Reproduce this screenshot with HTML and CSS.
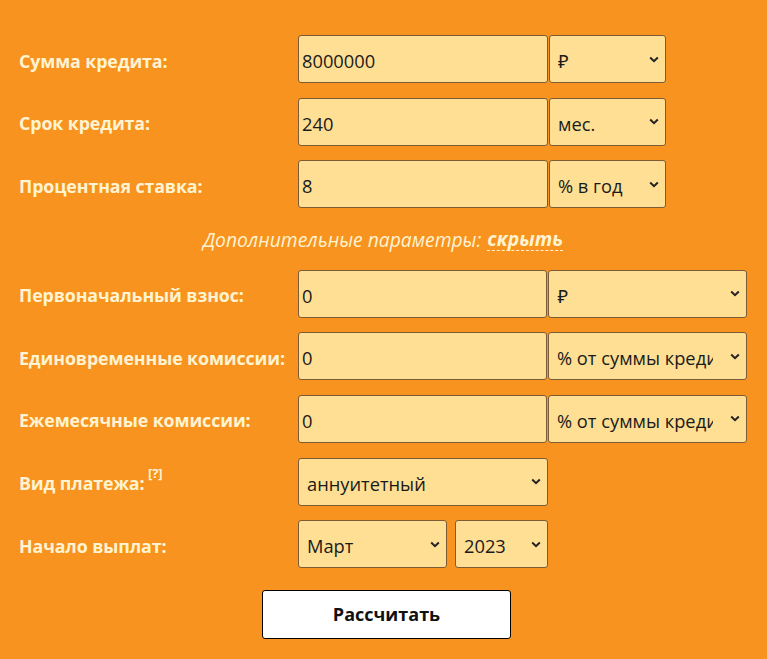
FILE: index.html
```html
<!DOCTYPE html>
<html lang="ru">
<head>
<meta charset="utf-8">
<title>Кредитный калькулятор</title>
<link rel="stylesheet" href="styles.css">
</head>
<body>
<form class="calc">
  <div class="row">
    <label class="lbl">Сумма кредита:</label>
    <input class="inp" type="text" value="8000000">
    <select class="sel sel-s"><option>₽</option></select>
  </div>
  <div class="row">
    <label class="lbl">Срок кредита:</label>
    <input class="inp" type="text" value="240">
    <select class="sel sel-s"><option>мес.</option></select>
  </div>
  <div class="row">
    <label class="lbl">Процентная ставка:</label>
    <input class="inp" type="text" value="8">
    <select class="sel sel-s"><option>% в год</option></select>
  </div>
  <div class="extra">Дополнительные параметры: <span class="toggle">скрыть</span></div>
  <div class="row">
    <label class="lbl">Первоначальный взнос:</label>
    <input class="inp" type="text" value="0">
    <select class="sel sel-l"><option>₽</option></select>
  </div>
  <div class="row">
    <label class="lbl">Единовременные комиссии:</label>
    <input class="inp" type="text" value="0">
    <select class="sel sel-l"><option>% от суммы кредита</option></select>
  </div>
  <div class="row">
    <label class="lbl">Ежемесячные комиссии:</label>
    <input class="inp" type="text" value="0">
    <select class="sel sel-l"><option>% от суммы кредита</option></select>
  </div>
  <div class="row">
    <label class="lbl">Вид платежа: <span class="hint">[?]</span></label>
    <select class="sel sel-w"><option>аннуитетный</option></select>
  </div>
  <div class="row">
    <label class="lbl">Начало выплат:</label>
    <div class="pair">
      <select class="sel sel-m"><option>Март</option></select>
      <select class="sel sel-y"><option>2023</option></select>
    </div>
  </div>
  <div class="actions">
    <button class="btn" type="button">Рассчитать</button>
  </div>
</form>
</body>
</html>
```
FILE: styles.css
```css
html, body {
  margin: 0;
  padding: 0;
  background: #f7931e;
}
body {
  font-family: "Open Sans", "Noto Sans", sans-serif;
  width: 767px;
  height: 659px;
  overflow: hidden;
}
.calc {
  width: 728px;
  padding: 35px 0 0 19px;
  display: flex;
  flex-direction: column;
}
.row {
  display: flex;
  align-items: center;
  height: 48px;
  margin-bottom: 14.6px;
}
.lbl {
  width: 279px;
  flex: none;
  color: #fff3d2;
  font-weight: 700;
  font-size: 17.8px;
  letter-spacing: -0.1px;
  padding-top: 3px;
  white-space: nowrap;
}
.hint {
  display: inline-block;
  font-size: 13px;
  vertical-align: top;
  line-height: 1;
  position: relative;
  top: -4px;
  margin-left: -1px;
}
.inp, .sel {
  box-sizing: border-box;
  height: 48px;
  background-color: #fedf93;
  border: 1px solid #7b5c36;
  border-radius: 3px;
  font-family: "Open Sans", "Noto Sans", sans-serif;
  font-size: 18.3px;
  color: #1a1a1a;
  margin: 0;
  outline: none;
}
.inp {
  width: 250px;
  padding: 3px 3px 0;
}
.sel {
  -webkit-appearance: none;
  appearance: none;
  padding: 3px 24px 0 8px;
  margin-left: 1px;
  background-image: url("data:image/svg+xml,%3Csvg xmlns='http://www.w3.org/2000/svg' width='10' height='7' viewBox='0 0 10 7'%3E%3Cpath d='M1.2 1.5 L5 5.2 L8.8 1.5' fill='none' stroke='%23222' stroke-width='2'/%3E%3C/svg%3E");
  background-repeat: no-repeat;
  background-position: right 6px center;
  background-size: 10px 7px;
  white-space: nowrap;
  overflow: hidden;
  text-overflow: clip;
}
.sel-s { width: 117px; }
.sel-l { width: 199px; padding-right: 33px; }
.sel-w { width: 250px; margin-left: 0; }
.pair {
  display: flex;
  gap: 8px;
}
.sel-m { width: 149px; margin-left: 0; }
.sel-y { width: 93px; margin-left: 0; }
.extra {
  height: 48px;
  margin: -7px 0 6px;
  display: flex;
  align-items: center;
  justify-content: center;
  font-style: italic;
  font-size: 19.3px;
  color: #fff3d2;
}
.toggle {
  font-weight: 700;
  margin-left: 6px;
  border-bottom: 1px dashed #fff3d2;
  line-height: 1.15;
}
.actions {
  display: flex;
  padding-left: 243px;
  margin-top: 7px;
}
.btn {
  width: 249px;
  height: 49px;
  background: #fff;
  border: 1px solid #000;
  border-radius: 3px;
  font-family: "Open Sans", "Noto Sans", sans-serif;
  font-weight: 700;
  font-size: 18px;
  color: #111;
}
```
